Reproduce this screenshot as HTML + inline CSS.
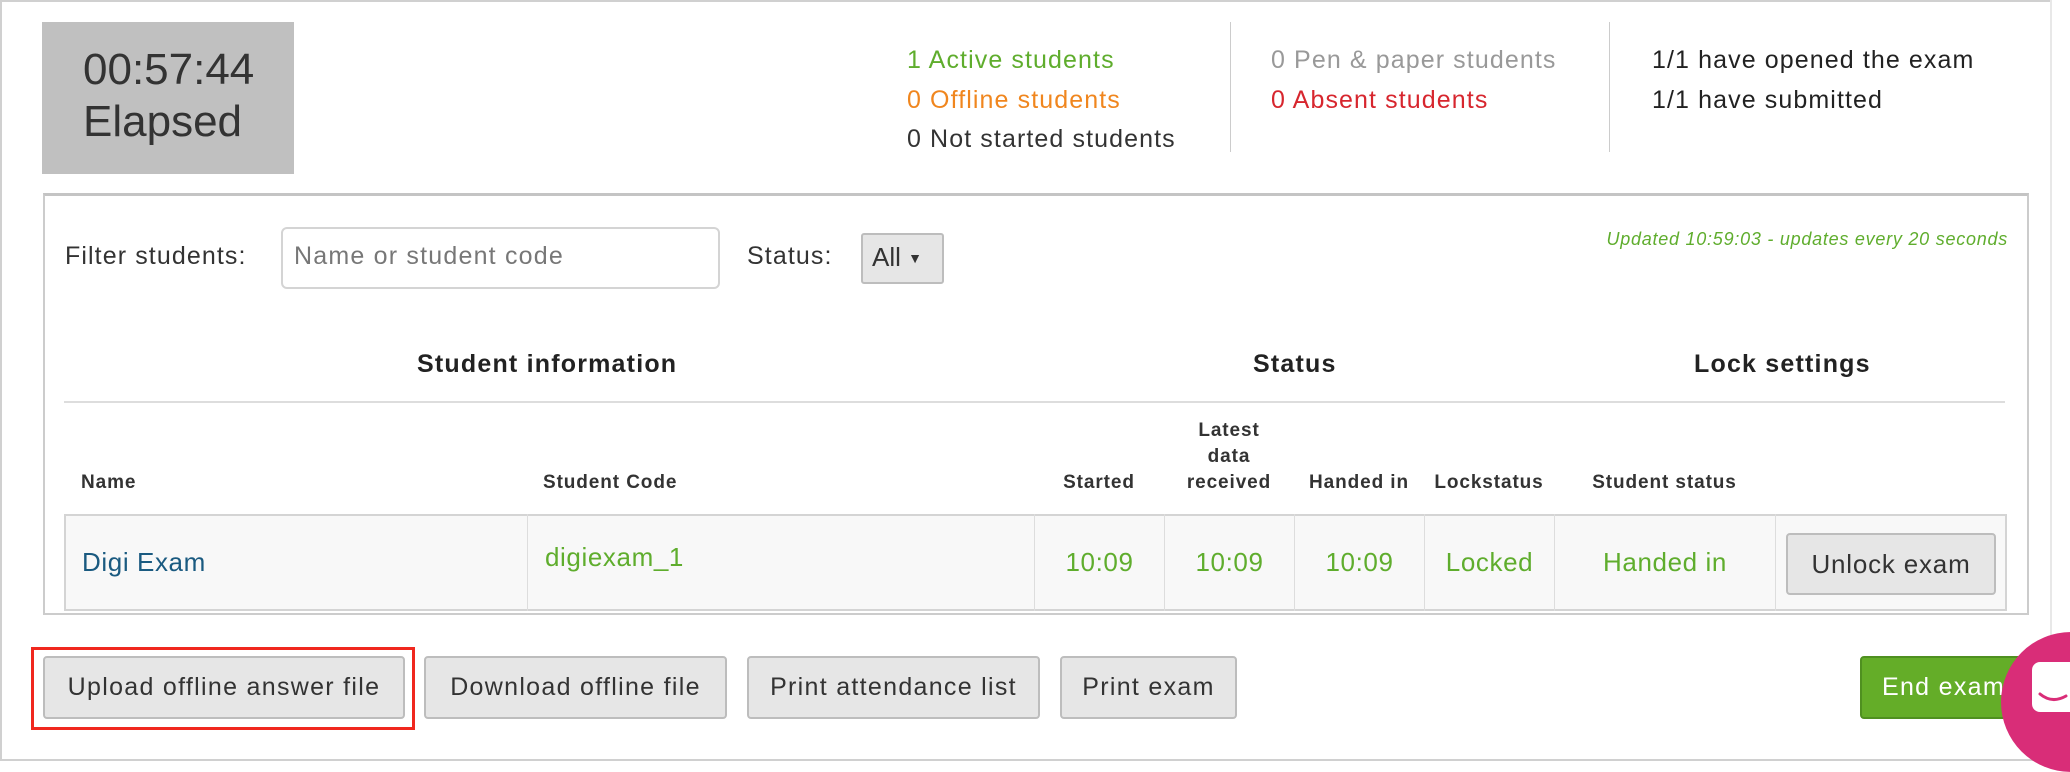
<!DOCTYPE html>
<html><head><meta charset="utf-8"><style>
*{box-sizing:border-box;margin:0;padding:0}
body{width:2070px;height:762px;background:#fff;font-family:"Liberation Sans",Arial,sans-serif;color:#333;position:relative;overflow:hidden}
.a{position:absolute;white-space:nowrap}
.btn{position:absolute;top:656px;height:63px;background:#e6e6e6;border:2px solid #bdbdbd;border-radius:4px;font-size:25px;letter-spacing:1.3px;color:#333;display:flex;align-items:center;justify-content:center}
.th{position:absolute;font-weight:bold;font-size:19px;letter-spacing:0.9px;color:#333;text-align:center;line-height:26px}
.cell{position:absolute;top:514px;height:97px;border-left:1px solid #ddd;display:flex;align-items:center;justify-content:center;font-size:26px;letter-spacing:0.6px;color:#5fad2d}
.st{font-size:25px;letter-spacing:1.1px;line-height:39.5px}
</style></head><body>
<div class="a" style="left:0;top:0;width:2052px;height:761px;border:2px solid #d0d0d0;border-right:none"></div>
<div class="a" style="left:2050px;top:0;width:2px;height:761px;background:#e8e8e8"></div>

<div class="a" style="left:42px;top:22px;width:252px;height:152px;background:#c0c0c0"></div>
<div class="a" style="left:83px;top:44px;font-size:44px;line-height:52px;color:#333">00:57:44<br>Elapsed</div>

<div class="a st" style="left:907px;top:41px">
<div style="color:#5fad2d">1 Active students</div>
<div style="color:#f0861e">0 Offline students</div>
<div style="color:#333">0 Not started students</div></div>
<div class="a" style="left:1230px;top:22px;width:1px;height:130px;background:#ccc"></div>
<div class="a st" style="left:1271px;top:41px">
<div style="color:#999">0 Pen &amp; paper students</div>
<div style="color:#d7262e">0 Absent students</div></div>
<div class="a" style="left:1609px;top:22px;width:1px;height:130px;background:#ccc"></div>
<div class="a st" style="left:1652px;top:41px;color:#222">
<div>1/1 have opened the exam</div><div>1/1 have submitted</div></div>

<div class="a" style="left:43px;top:193px;width:1986px;height:422px;border:2px solid #ccc;border-top:3px solid #c4c4c4"></div>
<div class="a" style="left:65px;top:242px;font-size:25px;letter-spacing:1.1px;color:#333">Filter students:</div>
<div class="a" style="left:281px;top:227px;width:439px;height:62px;border:2px solid #d4d4d4;border-radius:6px"></div>
<div class="a" style="left:294px;top:242px;font-size:25px;letter-spacing:1.2px;color:#777">Name or student code</div>
<div class="a" style="left:747px;top:242px;font-size:25px;letter-spacing:1.1px;color:#333">Status:</div>
<div class="a" style="left:861px;top:233px;width:83px;height:51px;background:#e6e6e6;border:2px solid #bdbdbd;border-radius:3px"></div>
<div class="a" style="left:872px;top:242px;font-size:26px;color:#333">All <span style="font-size:14px;position:relative;top:-3px">▼</span></div>
<div class="a" style="right:62px;top:229px;font-size:18px;letter-spacing:0.75px;font-style:italic;color:#5fad2d">Updated 10:59:03 - updates every 20 seconds</div>

<div class="a" style="left:417px;top:350px;font-size:25px;letter-spacing:1.2px;font-weight:bold;color:#222">Student information</div>
<div class="a" style="left:1253px;top:350px;font-size:25px;letter-spacing:1.2px;font-weight:bold;color:#222">Status</div>
<div class="a" style="left:1694px;top:350px;font-size:25px;letter-spacing:1.2px;font-weight:bold;color:#222">Lock settings</div>
<div class="a" style="left:64px;top:401px;width:1941px;height:2px;background:#ddd"></div>

<div class="th" style="left:81px;top:470px">Name</div>
<div class="th" style="left:543px;top:470px">Student Code</div>
<div class="th" style="left:1034px;top:470px;width:130px">Started</div>
<div class="th" style="left:1164px;top:418px;width:130px">Latest<br>data<br>received</div>
<div class="th" style="left:1294px;top:470px;width:130px">Handed in</div>
<div class="th" style="left:1424px;top:470px;width:130px">Lockstatus</div>
<div class="th" style="left:1554px;top:470px;width:221px">Student status</div>

<div class="a" style="left:64px;top:514px;width:1943px;height:97px;background:#f8f8f8;border:2px solid #d4d4d4"></div>
<div class="cell" style="left:64px;width:463px;border-left:none;justify-content:flex-start;padding-left:18px;color:#1a5a80">Digi Exam</div>
<div class="cell" style="left:527px;width:507px;justify-content:flex-start;padding-left:17px;padding-bottom:10px">digiexam_1</div>
<div class="cell" style="left:1034px;width:130px">10:09</div>
<div class="cell" style="left:1164px;width:130px">10:09</div>
<div class="cell" style="left:1294px;width:130px">10:09</div>
<div class="cell" style="left:1424px;width:130px">Locked</div>
<div class="cell" style="left:1554px;width:221px">Handed in</div>
<div class="cell" style="left:1775px;width:230px"></div>
<div class="btn" style="left:1786px;top:533px;width:210px;height:62px;font-size:26px;letter-spacing:0.8px">Unlock exam</div>

<div class="a" style="left:31px;top:647px;width:384px;height:83px;border:3px solid #f0281e"></div>
<div class="btn" style="left:43px;width:362px">Upload offline answer file</div>
<div class="btn" style="left:424px;width:303px">Download offline file</div>
<div class="btn" style="left:747px;width:293px">Print attendance list</div>
<div class="btn" style="left:1060px;width:177px">Print exam</div>
<div class="btn" style="left:1860px;width:175px;background:#64ad28;border-color:#4f9020;color:#fff;justify-content:flex-start;padding-left:20px">End exam</div>

<div class="a" style="left:2001px;top:632px;width:140px;height:140px;border-radius:50%;background:#d92d78"></div>
<div class="a" style="left:2032px;top:662px;width:50px;height:50px;border-radius:8px;background:#fff"></div>
<svg class="a" style="left:2032px;top:662px" width="40" height="50"><path d="M8 32 Q20 42 34 34" stroke="#d92d78" stroke-width="3" fill="none" stroke-linecap="round"/></svg>
</body></html>
